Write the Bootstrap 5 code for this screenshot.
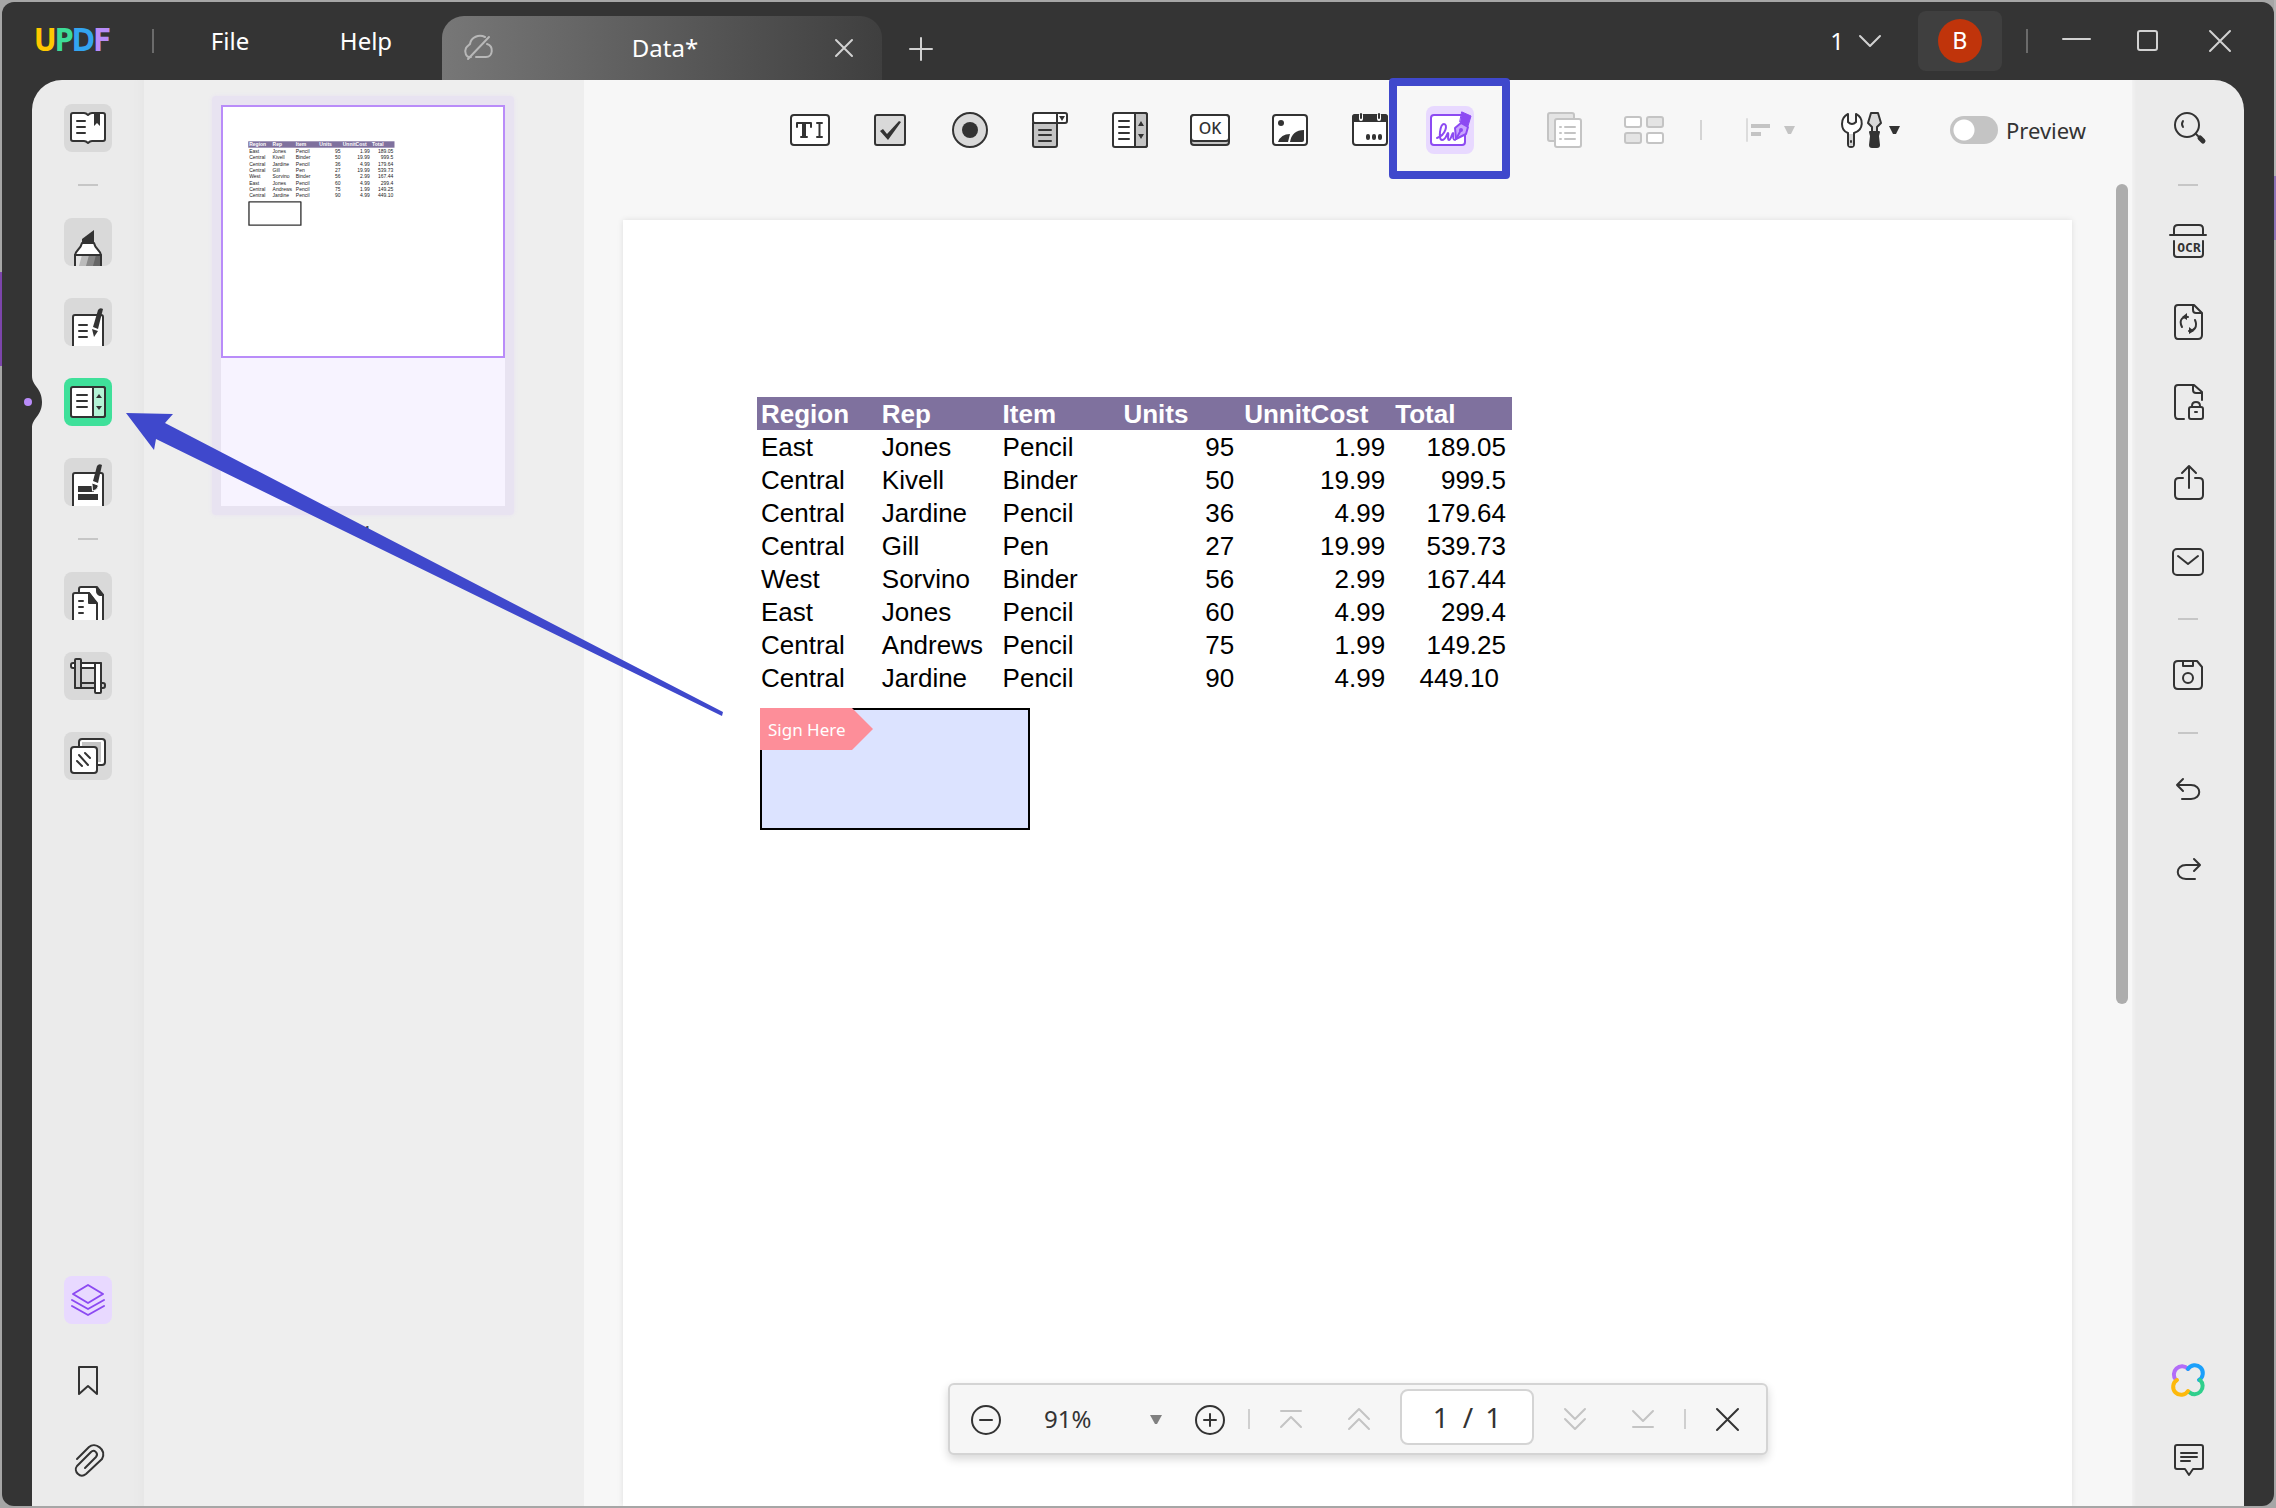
<!DOCTYPE html>
<html lang="en">
<head>
<meta charset="utf-8">
<meta name="viewport" content="width=device-width, initial-scale=1">
<title>UPDF - Data</title>
<link href="https://cdn.jsdelivr.net/npm/bootstrap@5.3.0/dist/css/bootstrap.min.css" rel="stylesheet">
<script src="https://cdn.jsdelivr.net/npm/bootstrap@5.3.0/dist/js/bootstrap.bundle.min.js" defer></script>
<style>
:root{--ink:#333;--frame:#343434;--bar:#ebebeb;--violet:#b98cf9;--note:#3f48cc}
body{font-family:"Noto Sans","Open Sans",sans-serif;font-size:24px;line-height:32px;color:var(--ink);
 background:linear-gradient(#a6a6a6 0 272px,#7c45ab 272px 366px,#a6a6a6 366px) left/2px 100% no-repeat,
 linear-gradient(#b4b4b4 0 176px,#8f74b8 176px 240px,#a6a6a6 240px) right/2px 100% no-repeat,#a6a6a6}
svg{display:block;fill:none;stroke:var(--ink);stroke-width:2;stroke-linecap:round;stroke-linejoin:round;overflow:visible}
.win{margin:2px;background:var(--frame);border-radius:12px;overflow:hidden;flex:1}
.win .btn{--bs-btn-border-width:0px;color:inherit;font-size:inherit;line-height:inherit;flex:none}
.titlebar{height:78px;color:#fff}
.vline{width:2px;height:24px;background:#6b6b6b;flex:none}
.brand{font-family:"DejaVu Sans",sans-serif;font-size:28px;-webkit-text-stroke:2px currentColor;width:118px;padding-left:33px}
.brand .y{color:#ffc800}.brand .g{color:#3ddc97}.brand .b{color:#33a5f0}.brand .v{color:#b98cf9}
.brand-rule{margin-left:32px}
.menu-link{width:136px;color:#fff;text-decoration:none;text-align:center}
.doc-tab{width:440px;height:64px;border-radius:22px 22px 0 0;background:linear-gradient(90deg,#777,#3f3f3f);padding:0 30px 0 20px}
.titlebar svg{stroke:#d2d2d2}
.account{width:84px;height:60px;border-radius:8px;background:#3f3f3f;margin-left:38px}
.avatar{width:44px;height:44px;border-radius:50%;background:#c0340b;font-family:Roboto,sans-serif}
.cap-btn{width:48px;height:48px}
.caps{padding-right:30px}
.shell{padding:0 30px}
.rail{width:112px;background:var(--bar);padding:24px 0 22px;gap:32px;flex:none}
.rail-l{border-top-left-radius:30px;box-shadow:inset -10px 0 6px -6px #e6e6e6}
.rail-r{border-top-right-radius:30px;box-shadow:inset 4px 0 3px -2px #f2f2f2}
.ib{width:48px;height:48px;border-radius:8px}
.tile{background:#d9d9d9}.tile-on{background:#3fe09a}.tile-v{background:#e8d9ff}
.tick{width:20px;height:2px;background:#c6c6c6;flex:none}
.notch{left:-8px;top:296px}
.thumbs{width:440px;background:#eee;padding:16px 70px 0 68px;flex:none}
.thumb-sel{background:#e8e3f1;border-radius:4px;padding:9px;box-shadow:0 0 4px #e8e3f1}
.thumb-body{background:#f7f3ff;height:401px}
.thumb-page{background:#fff;border:2px solid var(--violet)}
.thumb-num{font-size:20px;line-height:24px;color:#444;padding:6px 0 0 8px}
.thumb-page text{fill:#222;stroke:none;font:26px "Liberation Sans",Arial,sans-serif}
.thumb-page text.hd{fill:#fff;font-weight:700}
.workspace{background:#f7f7f7}
.toolbar{height:100px;padding:0 46px 0 0;flex:none}
.toolbar .grp{gap:32px}
.callout{position:relative}
.callout::after{content:"";position:absolute;inset:-28px -36px -25px -37px;border:8px solid var(--note);border-radius:4px;pointer-events:none}
.after-fields{margin-left:66px}
.opts{gap:48px;margin-left:42px}
.short{height:20px;background:#d4d4d4}
.preview{font-size:22px;gap:8px}
.preview input{appearance:none;width:48px;height:28px;border-radius:14px;margin:0;
 background:radial-gradient(circle at 14px 14px,#fff 10px,#c4c4c4 11px)}
.light svg{stroke:#c4c4c4}
.canvas-row{padding:0 4px 0 39px}
.sheet{background:#fff;margin:40px 44px 0 0;padding:177px 0 0 134px;box-shadow:0 0 6px rgba(0,0,0,.1)}
.track{width:12px;padding-top:4px}
.thumb-bar{height:62%;background:#adadad;border-radius:6px}
.data-grid{width:755px;table-layout:fixed;font:26px/31px "Liberation Sans",Arial,sans-serif;color:#000}
.data-grid th,.data-grid td{padding:2px 6px 0 4px;height:33px;white-space:nowrap}
.data-grid thead{background:#7f719e;color:#fff}
.data-grid td:nth-child(n+4){text-align:right}
.data-grid tr:last-child td:last-child{padding-right:13px}
.win .sign-field{width:270px;height:122px;margin:14px 0 0 3px;border:2px solid #000;background:#dce3ff;border-radius:0;position:relative;display:block}
.sign-flag{position:absolute;left:-2px;top:-2px;width:113px;height:42px;padding:0 0 0 8px;background:#fd8e99;color:#fff;
 font-size:17px;line-height:43px;text-align:left;clip-path:polygon(0 0,92px 0,100% 50%,92px 100%,0 100%)}
.pager{bottom:51px;left:50%;transform:translateX(-50%);height:72px;padding:0 12px;gap:14px;background:#f6f6f6;
 border:2px solid #d4d4d4;border-radius:6px;box-shadow:0 4px 10px rgba(0,0,0,.16)}
.pager .vline{background:#cfcfcf;height:20px}
.pager .nav-b{width:54px;height:48px}
.zoom-pick{width:148px;height:48px;border:0;color:var(--ink);padding-left:20px;appearance:none;
 background:url("data:image/svg+xml,%3Csvg xmlns='http://www.w3.org/2000/svg' width='12' height='9'%3E%3Cpath d='M0 0h12L7 9H5z' fill='%23808080'/%3E%3C/svg%3E") right 10px center no-repeat}
.page-box{width:134px;height:56px;margin-bottom:4px;border:2px solid #d4d4d4;border-radius:8px;background:#fff;font-size:28px;gap:12px}
.page-box input{width:18px;border:0;padding:0;background:none;color:inherit;line-height:36px}
.pointer{left:0;top:0;width:100%;height:100%;pointer-events:none}
</style>
</head>
<body class="d-flex flex-column vh-100 overflow-hidden position-relative">
<div class="win d-flex flex-column">
 <header class="titlebar d-flex align-items-center flex-shrink-0">
  <div class="brand flex-shrink-0"><span class="y">U</span><span class="g">P</span><span class="b">D</span><span class="v">F</span></div>
  <span class="vline brand-rule"></span>
  <nav class="d-flex ms-2"><a class="menu-link" href="#">File</a><a class="menu-link" href="#">Help</a></nav>
  <div class="doc-tab d-flex align-items-center justify-content-between align-self-end ms-2 flex-shrink-0">
   <svg width="32" height="32"><path d="M9 25C4 26 2 20 4 16c1-2 3-3 4-4 1-7 9-10 15-7M25 12c7 2 6 13-1 13H14M27 5L6 27" style="stroke:#b8b8b8"/></svg>
   <span>Data*</span>
   <button class="btn p-0" aria-label="Close tab"><svg width="16" height="16"><path d="M0 0l16 16M16 0L0 16"/></svg></button>
  </div>
  <button class="btn p-0 pt-3 ms-4 ps-1" aria-label="New tab"><svg width="22" height="22"><path d="M11 0v22M0 11h22"/></svg></button>
  <div class="caps d-flex align-items-center ms-auto">
   <button class="btn p-0 d-flex align-items-center gap-3" aria-label="Windows"><span>1</span><svg width="20" height="12"><path d="M0 1l10 10L20 1"/></svg></button>
   <button class="btn p-0 account d-flex align-items-center justify-content-center"><span class="avatar d-flex align-items-center justify-content-center">B</span></button>
   <span class="vline ms-4"></span>
   <button class="btn p-0 cap-btn ms-4" aria-label="Minimize"><svg width="48" height="48"><path d="M11 22h27"/></svg></button>
   <button class="btn p-0 cap-btn ms-4" aria-label="Maximize"><svg width="48" height="48"><rect x="14" y="14" width="19" height="19" rx="2"/></svg></button>
   <button class="btn p-0 cap-btn ms-4" aria-label="Close"><svg width="48" height="48"><path d="M14 14l20 20M34 14L14 34"/></svg></button>
  </div>
 </header>

 <div class="shell d-flex flex-grow-1">
  <aside class="rail rail-l d-flex flex-column align-items-center position-relative">
   <svg class="notch position-absolute" width="20" height="52"><path d="M8 0C8 10 18 12 18 26S8 42 8 52z" fill="#343434" stroke="none"/><circle cx="4" cy="26" r="4" fill="#b98cf9" stroke="none"/></svg>
   <button class="btn p-0 ib tile" aria-label="Reader"><svg width="48" height="48"><path d="M9 9h11q2 0 4 2 2-2 4-2h11q2 0 2 2v24q0 2-2 2H28q-2 0-4 2-2-2-4-2H9q-2 0-2-2V11q0-2 2-2z" fill="#fff"/><path d="M30 9h6v13l-3-3-3 3z" fill="#333" stroke="none"/><path d="M13 17h8M13 23h8M13 29h8"/></svg></button>
   <span class="tick"></span>
   <button class="btn p-0 ib tile" aria-label="Comment"><svg width="48" height="48"><path d="M11 48V37c0-4 6-6 7-12h12c1 6 7 8 7 12v11" fill="#fff" stroke-linecap="butt"/><path d="M12 37h24v11H12z" fill="#bbb" stroke="none"/><path d="M12 37h6l-3 11h-3z" fill="#e6e6e6" stroke="none"/><path d="M25 37h11v11H22z" fill="#888" stroke="none"/><path d="M32 37h4v11h-7z" fill="#666" stroke="none"/><path d="M11 37h26"/><path d="M18 25v-4l12-9v13z" fill="#333" stroke="none"/></svg></button>
   <button class="btn p-0 ib tile" aria-label="Edit PDF"><svg width="48" height="48"><path d="M9 48V19q0-2 2-2h26q2 0 2 2v29" fill="#fff" stroke-linecap="butt"/><path d="M15 27h8M15 33h8M15 39h8"/><path d="M34 12q2-3 5-1l-5 20-5-2z" fill="#333" stroke="none"/><path d="M28 31l6 2-4 6z" fill="#333" stroke="none"/></svg></button>
   <button class="btn p-0 ib tile-on" aria-label="Prepare form"><svg width="48" height="48"><rect x="7" y="9" width="34" height="30" rx="2" fill="#fff"/><path d="M29 9h10q2 0 2 2v26q0 2-2 2H29z" fill="#b4f4d6"/><path d="M13 17h10M13 23h10M13 29h10"/><path d="M35 16l3 4h-6zM35 32l3-4h-6z" fill="#333" stroke="none"/></svg></button>
   <button class="btn p-0 ib tile" aria-label="Redact"><svg width="48" height="48"><path d="M9 48V17q0-2 2-2h26q2 0 2 2v31" fill="#fff" stroke-linecap="butt"/><path d="M14 28h14l2 6H14zM14 36h20v6H14z" fill="#333" stroke="none"/><path d="M33 8q2-3 5-1l-4 18-5-2z" fill="#333" stroke="none"/><path d="M28 25l6 2q1 4-5 6z" fill="#333" style="stroke:#fff;stroke-width:1"/></svg></button>
   <span class="tick"></span>
   <button class="btn p-0 ib tile" aria-label="Organize pages"><svg width="48" height="48"><path d="M15 22v-6h17l7 9v23H16z" fill="#fff" stroke="none"/><path d="M15 20v-3q0-2 2-2h15l7 8v25" stroke-linecap="butt"/><path d="M33 15l6 8h-3q-3-1-3-4z" fill="#333"/><path d="M9 48V23q0-2 2-2h14l8 10v17" fill="#fff" stroke-linecap="butt"/><path d="M25 21l7 10h-7z" fill="#333"/><path d="M15 29h4M15 35h4M15 41h4"/></svg></button>
   <button class="btn p-0 ib tile" aria-label="Crop"><svg width="48" height="48"><path d="M9 11h28v5H9q-2 0-2-2v-1q0-2 2-2z" fill="#fff"/><path d="M11 31h28q2 0 2 2v1q0 2-2 2H11z" fill="#ccc"/><rect x="11" y="7" width="6" height="29" rx="1" fill="#ccc"/><rect x="31" y="11" width="6" height="30" rx="1" fill="#fff"/></svg></button>
   <button class="btn p-0 ib tile" aria-label="Batch"><svg width="48" height="48"><rect x="15" y="7" width="26" height="26" rx="3" fill="#fff"/><rect x="18" y="10" width="19" height="20" fill="#c4c4c4" stroke="none"/><rect x="7" y="15" width="26" height="26" rx="3" fill="#fff"/><path d="M15 23l9 10M21 21l5 5M13 29l5 5"/></svg></button>
   <button class="btn p-0 ib tile-v mt-auto" aria-label="Thumbnails"><svg width="48" height="48" style="stroke:#8c4af2"><path d="M24 9l15 9-15 9-15-9zM8 24l16 9 16-9M8 30l16 9 16-9"/></svg></button>
   <button class="btn p-0 ib" aria-label="Bookmarks"><svg width="48" height="48"><path d="M15 11h18v27l-9-8-9 8z"/></svg></button>
   <button class="btn p-0 ib" aria-label="Attachments"><svg width="48" height="48"><path d="M13 23L25 11c6-5 18 2 13 12L22 38c-6 5-13-3-9-8l14-14c3-3 8 1 5 5L21 32"/></svg></button>
  </aside>

  <section class="thumbs d-flex flex-column align-items-center">
   <div class="thumb-sel w-100"><div class="thumb-body"><div class="thumb-page"><svg id="mini" viewBox="0 0 1445 1285" width="100%"><rect x="130" y="177" width="755" height="33" fill="#7f719e" stroke="none"/><rect x="134" y="490" width="268" height="120" style="stroke-width:7"/></svg></div></div></div>
   <span class="thumb-num">1</span>
  </section>

  <main class="workspace flex-grow-1 d-flex flex-column position-relative">
   <div class="toolbar d-flex align-items-center justify-content-end">
    <div class="grp d-flex">
     <button class="btn p-0 ib" aria-label="Text field"><svg width="48" height="48"><rect x="5" y="9" width="38" height="30" rx="3" fill="#fff"/><path d="M11 21v-4h14v4M15 31h6"/><path d="M16 16h4v15h-4z" fill="#333" stroke="none"/><path d="M31 17h5M33.500 17v14M31 31h5"/></svg></button>
     <button class="btn p-0 ib" aria-label="Check box"><svg width="48" height="48"><rect x="9" y="9" width="30" height="30" rx="2" fill="#d9d9d9"/><path d="M14 25l3-2 4 5 12-13 2 1-13 18z" fill="#333" stroke="none"/></svg></button>
     <button class="btn p-0 ib" aria-label="Radio button"><svg width="48" height="48"><circle cx="24" cy="24" r="17" fill="#d9d9d9"/><circle cx="24" cy="24" r="8" fill="#333" stroke="none"/></svg></button>
     <button class="btn p-0 ib" aria-label="Dropdown"><svg width="48" height="48"><path d="M7 17v22q0 2 2 2h20q2 0 2-2V17z" fill="#c4c4c4"/><rect x="7" y="7" width="34" height="10" rx="2" fill="#fff"/><path d="M31 7v10M13 24h12M13 29h12M13 35h12"/><path d="M33 10h6l-3 5z" fill="#333" stroke="none"/></svg></button>
     <button class="btn p-0 ib" aria-label="List box"><svg width="48" height="48"><rect x="7" y="7" width="34" height="34" rx="2" fill="#fff"/><path d="M29 7h10q2 0 2 2v30q0 2-2 2H29z" fill="#c4c4c4"/><path d="M13 15h10M13 21h10M13 27h10M13 33h10"/><path d="M35 15l3 5h-6zM35 33l3-5h-6z" fill="#333" stroke="none"/></svg></button>
     <button class="btn p-0 ib" aria-label="Button"><svg width="48" height="48"><rect x="5" y="9" width="38" height="30" rx="3" fill="#c4c4c4"/><rect x="5" y="9" width="38" height="26" rx="3" fill="#fff"/><text x="24" y="28" text-anchor="middle" font-size="16" font-weight="500" fill="#333" stroke="none">OK</text></svg></button>
     <button class="btn p-0 ib" aria-label="Image"><svg width="48" height="48"><rect x="7" y="9" width="34" height="30" rx="3" fill="#fff"/><circle cx="15" cy="17" r="3" fill="#333" stroke="none"/><path d="M12 36q3-8 12-8l-2 8zM24 36q2-12 14-12v10q0 2-2 2z" fill="#333" stroke="none"/></svg></button>
     <button class="btn p-0 ib" aria-label="Date"><svg width="48" height="48"><rect x="7" y="9" width="34" height="30" rx="3" fill="#fff"/><path d="M7 15v-4q0-2 2-2h30q2 0 2 2v4z" fill="#333"/><path d="M15 9v4M33 9v4" style="stroke:#fff;stroke-width:4"/><path d="M15 8v4M33 8v4"/><path d="M22 30v2M28 30v2M34 30v2" style="stroke-width:4"/></svg></button>
     <button class="btn p-0 ib tile-v callout" aria-label="Digital signature"><svg width="48" height="48" style="stroke:#8c4af2"><rect x="5" y="9" width="34" height="30" rx="3" fill="#fff"/><path d="M11 32c9-3 11-14 7-14s-6 16-2 16 5-7 6-7-1 7 1 7 3-7 4-7-1 7 2 7"/><path d="M30 33l-1-11 6-5 7 4-2 7z" fill="#c9a5ff"/><path d="M36 6l9 4-3 10-8-4z" fill="#8c4af2" style="stroke-width:1"/><circle cx="35" cy="24" r="2" fill="#8c4af2" stroke="none"/><path d="M35 24l-5 9"/></svg></button>
    </div>
    <div class="grp d-flex align-items-center after-fields">
     <button class="btn p-0 ib light" aria-label="Duplicate"><svg width="48" height="48"><rect x="8" y="7" width="26" height="28" rx="2" fill="#e4e4e4"/><rect x="15" y="13" width="26" height="28" rx="2" fill="#fff"/><path d="M20 21h1M20 27h1M20 33h1M25 21h10M25 27h10M25 33h10"/></svg></button>
     <button class="btn p-0 ib light" aria-label="Tab order"><svg width="48" height="48"><rect x="5" y="11" width="16" height="10" rx="2" fill="#fff"/><rect x="27" y="11" width="16" height="10" rx="2" fill="#e4e4e4"/><rect x="5" y="27" width="16" height="10" rx="2" fill="#e4e4e4"/><rect x="27" y="27" width="16" height="10" rx="2" fill="#fff"/></svg></button>
     <span class="vline short"></span>
    </div>
    <div class="opts d-flex align-items-center">
     <button class="btn p-0" aria-label="Align"><svg width="50" height="48"><path d="M3 13v22" style="stroke:#dcdcdc"/><path d="M7 18h19v4H7zM7 26h10v4H7zM40 20h11l-4 8h-3z" fill="#c4c4c4" stroke="none"/></svg></button>
     <button class="btn p-0" aria-label="Tools"><svg width="60" height="48"><path d="M6 8C-2 12-2 24 6 27v11q0 3 3 3t3-3V27C22 24 22 12 14 8v8q-4 4-8 0z" fill="#fff"/><path d="M7 28h4v12H7z" fill="#d4d4d4" stroke="none"/><path d="M9 35v1"/><path d="M29 7h7l3 10-4 4v5h-5v-5l-4-4z" fill="#d9d9d9"/><path d="M28 26h9l-1 4 1 9q0 2-2 2h-5q-2 0-2-2l1-9z" fill="#333"/><path d="M47 20h11l-4 8h-3z" fill="#333" stroke="none"/></svg></button>
     <label class="preview d-flex align-items-center" for="pv"><input type="checkbox" role="switch" id="pv">Preview</label>
    </div>
   </div>
   <div class="canvas-row d-flex flex-grow-1">
    <article class="sheet flex-grow-1">
     <table class="data-grid" id="grid">
      <colgroup><col style="width:16%"><col style="width:16%"><col style="width:16%"><col style="width:16%"><col style="width:20%"><col style="width:16%"></colgroup>
      <thead><tr><th>Region</th><th>Rep</th><th>Item</th><th>Units</th><th>UnnitCost</th><th>Total</th></tr></thead>
      <tbody>
      <tr><td>East</td><td>Jones</td><td>Pencil</td><td>95</td><td>1.99</td><td>189.05</td></tr>
      <tr><td>Central</td><td>Kivell</td><td>Binder</td><td>50</td><td>19.99</td><td>999.5</td></tr>
      <tr><td>Central</td><td>Jardine</td><td>Pencil</td><td>36</td><td>4.99</td><td>179.64</td></tr>
      <tr><td>Central</td><td>Gill</td><td>Pen</td><td>27</td><td>19.99</td><td>539.73</td></tr>
      <tr><td>West</td><td>Sorvino</td><td>Binder</td><td>56</td><td>2.99</td><td>167.44</td></tr>
      <tr><td>East</td><td>Jones</td><td>Pencil</td><td>60</td><td>4.99</td><td>299.4</td></tr>
      <tr><td>Central</td><td>Andrews</td><td>Pencil</td><td>75</td><td>1.99</td><td>149.25</td></tr>
      <tr><td>Central</td><td>Jardine</td><td>Pencil</td><td>90</td><td>4.99</td><td>449.10</td></tr>
      </tbody>
     </table>
     <button class="btn p-0 sign-field"><span class="sign-flag">Sign Here</span></button>
    </article>
    <div class="track"><div class="thumb-bar"></div></div>
   </div>
   <div class="pager position-absolute d-flex align-items-center">
    <button class="btn p-0 ib" aria-label="Zoom out"><svg width="48" height="48"><circle cx="24" cy="25" r="14"/><path d="M18 25h12"/></svg></button>
    <select class="zoom-pick" aria-label="Zoom"><option>91%</option></select>
    <button class="btn p-0 ib" aria-label="Zoom in"><svg width="48" height="48"><circle cx="24" cy="25" r="14"/><path d="M18 25h12M24 19v12"/></svg></button>
    <span class="vline"></span>
    <button class="btn p-0 nav-b light" aria-label="First page"><svg width="54" height="48"><path d="M17 16h20M17 32l10-10 10 10"/></svg></button>
    <button class="btn p-0 nav-b light" aria-label="Previous page"><svg width="54" height="48"><path d="M17 24l10-10 10 10M17 34l10-10 10 10"/></svg></button>
    <div class="page-box d-flex align-items-center justify-content-center"><input value="1" aria-label="Page"><span>/</span><span>1</span></div>
    <button class="btn p-0 nav-b light" aria-label="Next page"><svg width="54" height="48"><path d="M17 14l10 10 10-10M17 24l10 10 10-10"/></svg></button>
    <button class="btn p-0 nav-b light" aria-label="Last page"><svg width="54" height="48"><path d="M17 16l10 10 10-10M17 32h20"/></svg></button>
    <span class="vline"></span>
    <button class="btn p-0 nav-b" aria-label="Close bar"><svg width="54" height="48"><path d="M17 14l21 21M38 14L17 35"/></svg></button>
   </div>
  </main>

  <aside class="rail rail-r d-flex flex-column align-items-center">
   <button class="btn p-0 ib" aria-label="Search"><svg width="48" height="48"><circle cx="23" cy="21" r="12"/><path d="M19 17q-2 3 0 6"/><path d="M32 30l2 2"/><path d="M36 34l3 3" style="stroke-width:5"/></svg></button>
   <span class="tick"></span>
   <button class="btn p-0 ib" aria-label="OCR"><svg width="48" height="48"><path d="M10 16v-5q0-4 4-4h21q4 0 4 4v5M6 17h36M10 23v13q0 3 3 3h23q3 0 3-3V23"/><text x="25" y="34" text-anchor="middle" font-family="DejaVu Sans Mono" font-size="13" font-weight="700" fill="#333" stroke="none">OCR</text></svg></button>
   <button class="btn p-0 ib" aria-label="Convert"><svg width="48" height="48"><path d="M14 7h16l8 8v22q0 4-4 4H14q-3 0-3-4V10q0-3 3-3zM29 7v5q0 3 3 3h6"/><path d="M18 29c-4-8 2-11 6-10M31 22c3 7-1 11-6 11"/><path d="M23 15l0 7-5-3zM25 29l0 7 5-3z" fill="#333" stroke="none"/></svg></button>
   <button class="btn p-0 ib" aria-label="Protect"><svg width="48" height="48"><path d="M20 41h-6q-3 0-3-4V10q0-3 3-3h16l8 7v8M29 7v5q0 3 3 3h6"/><rect x="25" y="29" width="14" height="12" rx="2"/><path d="M28 28q0-4 4-4t4 4M31 34h2"/></svg></button>
   <button class="btn p-0 ib" aria-label="Share"><svg width="48" height="48"><path d="M19 20h-4q-4 0-4 4v13q0 4 4 4h20q4 0 4-4V24q0-4-4-4h-4M25 30V8M18 15l7-7 7 7"/></svg></button>
   <button class="btn p-0 ib" aria-label="Email"><svg width="48" height="48"><rect x="9" y="11" width="30" height="26" rx="4"/><path d="M14 18l10 8 10-8"/></svg></button>
   <span class="tick"></span>
   <button class="btn p-0 ib" aria-label="Save"><svg width="48" height="48"><path d="M14 9h19l5 6v18q0 4-4 4H14q-4 0-4-4V13q0-4 4-4z"/><path d="M19 9v5h10V9"/><circle cx="24" cy="26" r="5"/></svg></button>
   <span class="tick"></span>
   <button class="btn p-0 ib" aria-label="Undo"><svg width="48" height="48"><path d="M19 13l-6 6 6 6M13 19h14c11 0 11 14 0 14h-9"/></svg></button>
   <button class="btn p-0 ib" aria-label="Redo"><svg width="48" height="48"><path d="M30 13l6 6-6 6M35 19H22c-11 0-11 14 0 14h9"/></svg></button>
   <button class="btn p-0 ib mt-auto" aria-label="UPDF AI"><svg width="48" height="48" style="stroke-width:4"><path d="M12 24A8 8 0 1 1 24 13" style="stroke:#b26cf8"/><path d="M24 13A8 8 0 1 1 35 24" style="stroke:#1ba0fb"/><path d="M36 24A8 8 0 1 1 25 36" style="stroke:#2fcf8c"/><path d="M24 35A8 8 0 1 1 13 24" style="stroke:#fdb90c"/></svg></button>
   <button class="btn p-0 ib" aria-label="Comments"><svg width="48" height="48"><path d="M13 9h24q2 0 2 2v20q0 2-2 2h-8l-4 6-4-6h-8q-2 0-2-2V11q0-2 2-2z"/><path d="M17 17h16M17 21h16M17 25h9"/></svg></button>
  </aside>
 </div>
</div>
<svg class="pointer position-absolute"><path d="M126 413l47 1-8 9 558 289-1 4-566-277-2 11z" fill="#3f48cc" stroke="none"/></svg>
<script>
// Draw the page thumbnail from the rows of the open document.
const mini = document.getElementById('mini');
const starts = [135, 256, 376, 497, 618, 769], ends = [0, 0, 0, 607, 758, 879];
[...document.getElementById('grid').rows].forEach((row, r) => {
  [...row.cells].forEach((cell, c) => {
    const t = document.createElementNS('http://www.w3.org/2000/svg', 'text');
    const right = r > 0 && c > 2;
    t.setAttribute('x', right ? ends[c] : starts[c]);
    t.setAttribute('y', 203 + r * 33);
    if (right) t.setAttribute('text-anchor', 'end');
    if (r === 0) t.setAttribute('class', 'hd');
    t.textContent = cell.textContent;
    mini.append(t);
  });
});
</script>
</body>
</html>
